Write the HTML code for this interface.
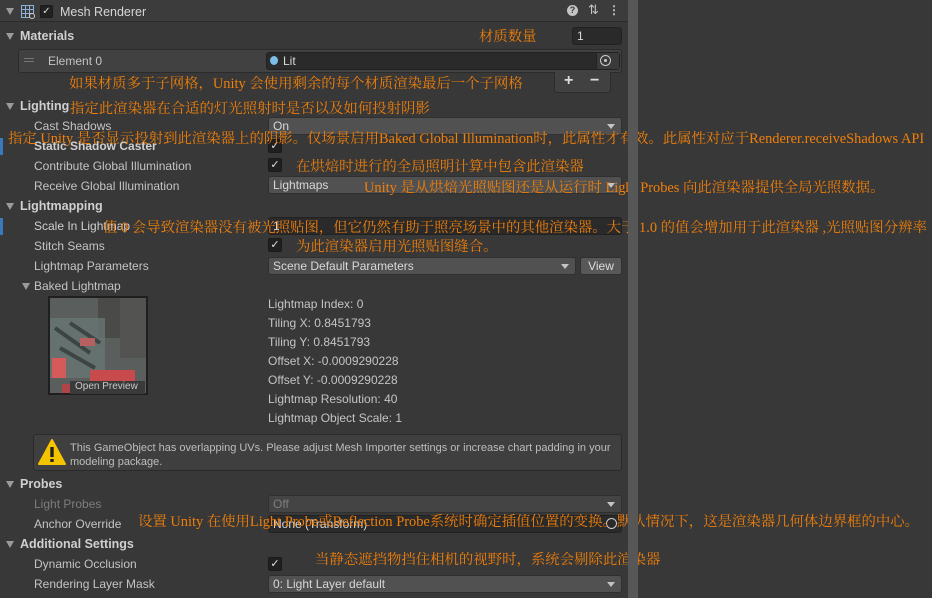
<!DOCTYPE html>
<html><head><meta charset="utf-8"><style>
*{margin:0;padding:0;box-sizing:border-box}
body{width:932px;height:598px;background:#383838;position:relative;overflow:hidden;font-family:"Liberation Sans",sans-serif;font-size:12px;color:#c4c4c4}
.a{position:absolute;white-space:nowrap;line-height:14px}
.lb{position:absolute;left:34px;white-space:nowrap;line-height:14px}
.hd{position:absolute;left:20px;font-size:12.5px;color:#d0d0d0;font-weight:bold;line-height:14px}
.tri{position:absolute;width:0;height:0;border-left:4.5px solid transparent;border-right:4.5px solid transparent;border-top:7px solid #9a9a9a}
.dd{position:absolute;background:#515151;border:1px solid #303030;border-radius:3px;height:18px;padding-left:4px;line-height:16px;color:#d8d8d8}
.dd:after{content:"";position:absolute;right:6px;top:6px;border-left:4px solid transparent;border-right:4px solid transparent;border-top:5px solid #c4c4c4}
.fld{position:absolute;background:#2a2a2a;border:1px solid #212121;border-radius:3px;height:18px;padding-left:4px;line-height:16px;color:#d8d8d8}
.cb{position:absolute;left:268px;width:14px;height:14px;background:#202020;border:1px solid #1a1a1a;border-radius:2px;color:#e0e0e0;font-size:11px;line-height:12px;text-align:center}
.o{position:absolute;white-space:nowrap;color:#f07f0a;font-family:"Liberation Serif","Noto Serif CJK SC",serif;font-size:14.4px;line-height:16px}
.bar{position:absolute;left:0;width:3px;background:#3a79bb}
</style></head><body>
<div style="position:absolute;left:0;top:0;width:628px;height:22px;background:#3c3c3c;border-bottom:1px solid #2a2a2a"></div>
<div class="tri" style="left:6px;top:8px"></div>
<svg style="position:absolute;left:20px;top:4px" width="16" height="16" viewBox="0 0 16 16" fill="none" stroke="#8fb0d8" stroke-width="1"><rect x="1.5" y="1.5" width="12" height="12"/><path d="M5.5 1.5v12M9.5 1.5v12M1.5 5.5h12M1.5 9.5h12"/><circle cx="12" cy="12" r="2.5" fill="#383838" stroke="#ccc"/></svg>
<div style="position:absolute;left:40px;top:5px;width:13px;height:13px;background:#222;border:1px solid #1a1a1a;border-radius:2px;color:#ddd;font-size:10px;line-height:11px;text-align:center">✓</div>
<div class="a" style="left:60px;top:5px;font-size:12.5px;color:#d6d6d6">Mesh Renderer</div>
<div style="position:absolute;left:567px;top:5px;width:11px;height:11px;border-radius:50%;background:#c4c4c4;color:#383838;font-size:9px;font-weight:bold;line-height:11px;text-align:center">?</div>
<div class="a" style="left:588px;top:3px;color:#c4c4c4;font-size:13px">⇅</div>
<div class="a" style="left:608px;top:3px;color:#c4c4c4;font-weight:bold">⋮</div>

<div class="tri" style="left:6px;top:33px"></div>
<div class="hd" style="top:29px">Materials</div>
<div class="o" style="left:479px;top:29px">材质数量</div>
<div class="fld" style="left:572px;top:27px;width:50px">1</div>
<div style="position:absolute;left:18px;top:49px;width:604px;height:24px;background:#414141;border:1px solid #2b2b2b;border-radius:3px"></div>
<div style="position:absolute;left:24px;top:58px;width:10px;height:4px;border-top:1px solid #777;border-bottom:1px solid #777"></div>
<div class="a" style="left:48px;top:54px">Element 0</div>
<div class="fld" style="left:266px;top:52px;width:354px;padding-left:16px">Lit</div>
<div style="position:absolute;left:270px;top:56px;width:8px;height:9px;border-radius:50%;background:#7bbfe8"></div>
<div style="position:absolute;left:596px;top:53px;width:23px;height:16px;background:#3a3a3a;border-left:1px solid #252525"></div>
<div style="position:absolute;left:600px;top:55px;width:11px;height:11px;border-radius:50%;border:1px solid #ccc"></div>
<div style="position:absolute;left:604px;top:59px;width:3px;height:3px;border-radius:50%;background:#ccc"></div>
<div style="position:absolute;left:554px;top:72px;width:57px;height:21px;background:#414141;border:1px solid #2b2b2b;border-top:none;border-radius:0 0 3px 3px"></div>
<div class="a" style="left:564px;top:74px;font-size:16px;color:#ddd;font-weight:bold">+</div>
<div class="a" style="left:590px;top:74px;font-size:16px;color:#ddd;font-weight:bold">−</div>
<div class="o" style="left:69px;top:76px">如果材质多于子网格，Unity 会使用剩余的每个材质渲染最后一个子网格</div>

<div class="tri" style="left:6px;top:103px"></div>
<div class="hd" style="top:99px">Lighting</div>
<div class="o" style="left:70px;top:101px">指定此渲染器在合适的灯光照射时是否以及如何投射阴影</div>
<div class="lb" style="top:119px">Cast Shadows</div>
<div class="dd" style="left:268px;top:117px;width:354px">On</div>
<div class="bar" style="top:138px;height:17px"></div>
<div class="lb" style="top:139px;font-weight:bold;color:#d0d0d0">Static Shadow Caster</div>
<div class="cb" style="top:139px">✓</div>
<div class="o" style="left:8px;top:131px">指定 Unity 是否显示投射到此渲染器上的阴影。仅场景启用Baked Global Illumination时，此属性才有效。此属性对应于Renderer.receiveShadows API</div>
<div class="lb" style="top:159px">Contribute Global Illumination</div>
<div class="cb" style="top:158px">✓</div>
<div class="o" style="left:296px;top:159px">在烘焙时进行的全局照明计算中包含此渲染器</div>
<div class="lb" style="top:179px">Receive Global Illumination</div>
<div class="dd" style="left:268px;top:176px;width:354px">Lightmaps</div>
<div class="o" style="left:364px;top:180px">Unity 是从烘焙光照贴图还是从运行时 Light Probes 向此渲染器提供全局光照数据。</div>

<div class="tri" style="left:6px;top:203px"></div>
<div class="hd" style="top:199px">Lightmapping</div>
<div class="bar" style="top:218px;height:17px"></div>
<div class="lb" style="top:219px;color:#d0d0d0">Scale In Lightmap</div>
<div class="fld" style="left:268px;top:217px;width:354px">1</div>
<div class="o" style="left:103px;top:220px">值 0 会导致渲染器没有被光照贴图，但它仍然有助于照亮场景中的其他渲染器。大于 1.0 的值会增加用于此渲染器 ,光照贴图分辨率</div>
<div class="lb" style="top:239px">Stitch Seams</div>
<div class="cb" style="top:238px">✓</div>
<div class="o" style="left:296px;top:239px">为此渲染器启用光照贴图缝合。</div>
<div class="lb" style="top:259px">Lightmap Parameters</div>
<div class="dd" style="left:268px;top:257px;width:308px">Scene Default Parameters</div>
<div style="position:absolute;left:580px;top:257px;width:42px;height:18px;background:#585858;border:1px solid #303030;border-radius:3px;text-align:center;line-height:16px;color:#ddd">View</div>
<div class="tri" style="left:22px;top:283px"></div>
<div class="lb" style="top:279px">Baked Lightmap</div>
<div style="position:absolute;left:48px;top:296px;width:100px;height:99px;background:#1f1f1f;padding:2px">
<svg width="96" height="95" viewBox="0 0 96 95"><rect width="96" height="95" fill="#5a5f5d"/><rect x="48" y="0" width="48" height="40" fill="#4a4a48"/><rect x="70" y="0" width="26" height="60" fill="#535351"/><rect x="0" y="20" width="55" height="60" fill="#667574" opacity=".8"/><path d="M5 30 L40 55 M10 50 L45 70 M20 25 L50 45" stroke="#3d4444" stroke-width="4"/><rect x="2" y="60" width="14" height="20" fill="#d65a5a"/><rect x="40" y="72" width="45" height="15" fill="#c94a4c"/><rect x="30" y="40" width="15" height="8" fill="#b86060"/><rect x="12" y="86" width="70" height="9" fill="#b04446"/></svg>
</div>
<div class="a" style="left:70px;top:381px;width:75px;height:13px;background:#3a3a3a;color:#c8c8c8;font-size:10px;line-height:12px;padding-left:5px">Open Preview</div>
<div class="a" style="left:268px;top:297px">Lightmap Index: 0</div>
<div class="a" style="left:268px;top:316px">Tiling X: 0.8451793</div>
<div class="a" style="left:268px;top:335px">Tiling Y: 0.8451793</div>
<div class="a" style="left:268px;top:354px">Offset X: -0.0009290228</div>
<div class="a" style="left:268px;top:373px">Offset Y: -0.0009290228</div>
<div class="a" style="left:268px;top:392px">Lightmap Resolution: 40</div>
<div class="a" style="left:268px;top:411px">Lightmap Object Scale: 1</div>
<div style="position:absolute;left:33px;top:434px;width:589px;height:37px;background:#3f3f3f;border:1px solid #2a2a2a;border-radius:3px"></div>
<svg style="position:absolute;left:38px;top:438px" width="28" height="28" viewBox="0 0 28 28"><path d="M14 2 L27 26 L1 26 Z" fill="#f5c400" stroke="#f5c400" stroke-linejoin="round" stroke-width="2"/><rect x="12.3" y="9" width="3.4" height="10" fill="#222"/><rect x="12.3" y="21" width="3.4" height="3" fill="#222"/></svg>
<div class="a" style="left:70px;top:441px;font-size:11px;color:#bdbdbd;line-height:14px">This GameObject has overlapping UVs. Please adjust Mesh Importer settings or increase chart padding in your<br>modeling package.</div>

<div class="tri" style="left:6px;top:481px"></div>
<div class="hd" style="top:477px">Probes</div>
<div class="lb" style="top:497px;color:#7d7d7d">Light Probes</div>
<div class="dd" style="left:268px;top:495px;width:354px;background:#444;color:#7d7d7d">Off</div>
<div class="lb" style="top:517px">Anchor Override</div>
<div class="fld" style="left:268px;top:515px;width:354px">None (Transform)</div>
<div style="position:absolute;left:606px;top:518px;width:11px;height:11px;border-radius:50%;border:1px solid #ccc"></div>
<div class="o" style="left:138px;top:514px">设置 Unity 在使用Light Probe或Reflection Probe系统时确定插值位置的变换。默认情况下，这是渲染器几何体边界框的中心。</div>

<div class="tri" style="left:6px;top:541px"></div>
<div class="hd" style="top:537px">Additional Settings</div>
<div class="lb" style="top:557px">Dynamic Occlusion</div>
<div class="cb" style="top:557px">✓</div>
<div class="o" style="left:315px;top:552px">当静态遮挡物挡住相机的视野时，系统会剔除此渲染器</div>
<div class="lb" style="top:577px">Rendering Layer Mask</div>
<div class="dd" style="left:268px;top:575px;width:354px">0: Light Layer default</div>

<div style="position:absolute;left:628px;top:0;width:10px;height:598px;background:#575757"></div>
</body></html>
